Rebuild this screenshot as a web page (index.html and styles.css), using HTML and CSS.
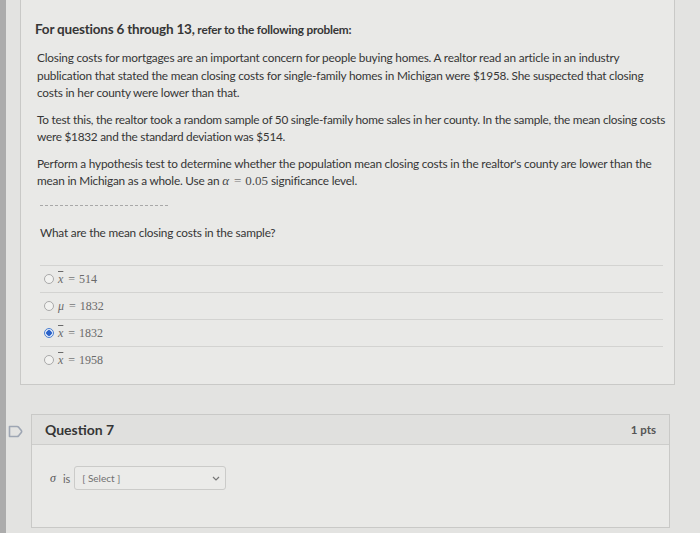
FILE: index.html
```html
<!DOCTYPE html>
<html lang="en">
<head>
  <meta charset="UTF-8" />
  <meta name="viewport" content="width=device-width, initial-scale=1" />
  <title>Quiz - Questions 6 through 13</title>
  <link rel="stylesheet" href="styles.css">
</head>
<body>
  <div class="rail"></div>

  <main class="quiz">
    <section class="card text-card">
      <h2 class="lead"><span class="lead-big">For questions 6 through 13,</span> refer to the following problem:</h2>

      <p>Closing costs for mortgages are an important concern for people buying homes. A realtor read an article in an industry publication that stated the mean closing costs for single-family homes in Michigan were $1958. She suspected that closing costs in her county were lower than that.</p>

      <p class="tight">To test this, the realtor took a random sample of 50 single-family home sales in her county. In the sample, the mean closing costs were $1832 and the standard deviation was $514.</p>

      <p>Perform a hypothesis test to determine whether the population mean closing costs in the realtor's county are lower than the mean in Michigan as a whole. Use an <span class="math"><i>&alpha;</i><span class="eq">=</span>0.05</span> significance level.</p>

      <div class="rule"></div>

      <p class="prompt">What are the mean closing costs in the sample?</p>

      <ul class="answers">
        <li><span class="radio"></span><span class="math"><i class="bar">x</i><span class="eq">=</span>514</span></li>
        <li><span class="radio"></span><span class="math"><i>&mu;</i><span class="eq">=</span>1832</span></li>
        <li><span class="radio checked"></span><span class="math"><i class="bar">x</i><span class="eq">=</span>1832</span></li>
        <li><span class="radio"></span><span class="math"><i class="bar">x</i><span class="eq">=</span>1958</span></li>
      </ul>
    </section>

    <div class="question-row">
      <!-- flag question -->
      <svg class="flag" width="15" height="13" viewBox="0 0 15 13">
        <path d="M1.5 1.5 H9 Q10 1.5 10.8 2.4 L13.3 5.6 Q14 6.5 13.3 7.4 L10.8 10.6 Q10 11.5 9 11.5 H1.5 Z" fill="none" stroke="#9ea6b3" stroke-width="1.6" stroke-linejoin="round"/>
      </svg>

      <section class="card question">
        <header class="q-head">
          <span class="q-title">Question 7</span>
          <span class="q-pts">1 pts</span>
        </header>
        <div class="q-body">
          <span class="math"><i>&sigma;</i></span>
          <span class="is">is</span>
          <div class="select">
            <span>[ Select ]</span>
            <svg width="8" height="5" viewBox="0 0 8 5">
              <path d="M1 1 L4 4 L7 1" fill="none" stroke="#777" stroke-width="1.2"/>
            </svg>
          </div>
        </div>
      </section>
    </div>
  </main>
</body>
</html>
```

FILE: styles.css
```css
body {
  margin: 0;
  padding: 0;
  display: flex;
  min-height: 533px;
  background-color: #e3e3e1;
  font-family: 'Lato', 'Liberation Sans', sans-serif;
  color: #363636;
}
.rail {
  width: 6px;
  flex-shrink: 0;
  background-color: #acacac;
}
.quiz {
  width: 655px;
  padding-left: 14px;
}
.card {
  background-color: #e9e9e7;
  border: 1px solid #c9c9c7;
}
.text-card {
  border-top: 0;
  padding: 20px 3px 11px 14px;
}
.lead {
  margin: 0 0 10px 0;
  font-size: 11.8px;
  font-weight: bold;
  line-height: 18px;
  letter-spacing: -0.2px;
}
.lead-big {
  font-size: 13.5px;
}
.text-card p {
  margin: 0 0 9px 2px;
  font-size: 11.8px;
  line-height: 17.5px;
  letter-spacing: -0.2px;
}
.text-card p.tight {
  letter-spacing: -0.25px;
}
.math {
  font-family: 'Liberation Serif', 'DejaVu Serif', serif;
  font-size: 13px;
  color: #4a4a4a;
  letter-spacing: 0;
  white-space: nowrap;
}
.math i {
  padding-right: 1px;
}
.eq {
  margin: 0 4px;
  color: #777;
}
.bar {
  text-decoration: overline;
}
.rule {
  width: 128px;
  margin: 15px 0 18px 5px;
  border-top: 1px dashed #a8a8a8;
}
.text-card p.prompt {
  margin: 0 0 24px 5px;
}
.answers {
  list-style: none;
  margin: 0 8px 0 5px;
  padding: 0;
}
.answers li {
  display: flex;
  align-items: center;
  gap: 4px;
  height: 26px;
  padding-left: 4px;
  border-top: 1px solid #d3d3d1;
}
.answers .math {
  font-size: 12px;
  color: #6a6a6a;
}
.radio {
  width: 8px;
  height: 8px;
  border: 1px solid #a9a9a9;
  border-radius: 50%;
  background-color: #f2f2f0;
}
.radio.checked {
  border-color: #4b7fd0;
  background: radial-gradient(circle, #2a62c9 0 2.5px, #dfe8f7 3px);
}
.question-row {
  display: flex;
  align-items: flex-start;
  margin-top: 29px;
  margin-left: -12px;
}
.flag {
  margin: 11px 8px 0 0;
  flex-shrink: 0;
}
.question {
  flex: 1;
  margin-right: 5px;
}
.q-head {
  display: flex;
  justify-content: space-between;
  align-items: center;
  height: 29px;
  padding: 0 13px 0 13px;
  background-color: #e0e0de;
  border-bottom: 1px solid #cdcdcb;
}
.q-title {
  font-size: 14px;
  font-weight: bold;
}
.q-pts {
  font-size: 11.5px;
  font-weight: bold;
  color: #555;
}
.q-body {
  display: flex;
  align-items: center;
  height: 82px;
  padding: 0 0 16px 18px;
  box-sizing: border-box;
}
.q-body .math {
  font-size: 12px;
  color: #555;
}
.is {
  font-size: 11px;
  color: #666;
  margin: 0 4px 0 6px;
}
.select {
  display: flex;
  justify-content: space-between;
  align-items: center;
  width: 152px;
  height: 24px;
  box-sizing: border-box;
  padding: 0 5px 0 7px;
  border: 1px solid #cbcbc9;
  border-radius: 3px;
  background-color: #ebebe9;
  font-size: 10px;
  color: #707070;
}
```
